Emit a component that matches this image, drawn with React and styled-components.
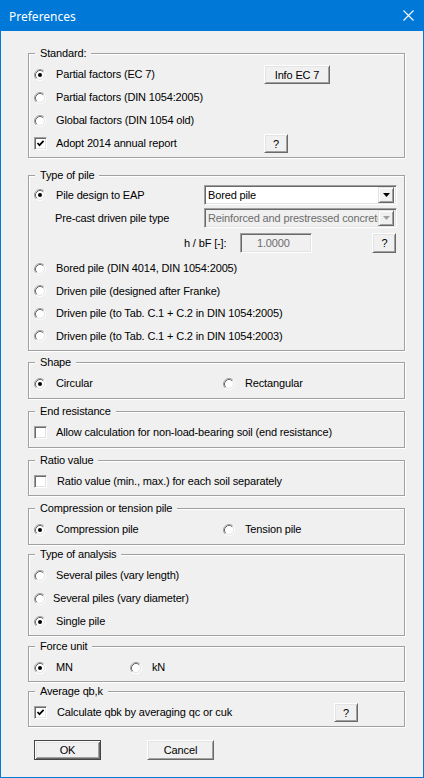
import React from "react";
import styled, { createGlobalStyle } from "styled-components";

const GlobalStyle = createGlobalStyle`
  html, body { margin: 0; padding: 0; background: #f0f0f0; }
  * { box-sizing: border-box; }
`;

const FONT = `"Liberation Sans", Arial, sans-serif`;
const LS = "-0.15px";

const Window = styled.div`
  width: 424px;
  height: 778px;
  display: flex;
  flex-direction: column;
  background: #f0f0f0;
  border-left: 1px solid #0078d7;
  border-right: 1px solid #0078d7;
  border-bottom: 1px solid #0078d7;
  font-family: ${FONT};
  font-size: 11px;
  letter-spacing: ${LS};
  color: #000;
`;

const TitleBar = styled.div`
  height: 31px;
  margin: 0 -1px;
  background: #0078d7;
  display: flex;
  align-items: center;
  justify-content: space-between;
  padding: 0 10px 0 9px;
  flex: none;
`;

const Title = styled.span`
  font-family: "Noto Sans", "Open Sans", sans-serif;
  font-size: 12px;
  letter-spacing: 0;
  color: #fff;
  margin-top: 1px;
`;

const Body = styled.div`
  display: flex;
  flex-direction: column;
  padding: 0 18px 0 27px;
`;

const Group = styled.div`
  margin-top: ${(p) => p.$mt}px;
  height: ${(p) => p.$h}px;
  border: 1px solid #a0a0a0;
  box-shadow: inset 1px 1px 0 #fff, 1px 1px 0 #fff;
  display: flex;
  flex-direction: column;
  flex: none;
`;

const Legend = styled.span`
  align-self: flex-start;
  margin: -7px 0 0 6px;
  padding: 0 5px 0 5px;
  height: 13px;
  line-height: 13px;
  background: #f0f0f0;
  white-space: nowrap;
`;

const Rows = styled.div`
  display: flex;
  flex-direction: column;
  margin-top: 3px;
`;

const Row = styled.div`
  display: flex;
  align-items: center;
  height: ${(p) => p.$h || 23}px;
  margin-top: ${(p) => p.$mt || 0}px;
  padding-left: ${(p) => (p.$pl == null ? 5 : p.$pl)}px;
  flex: none;
`;

const Item = styled.label`
  display: flex;
  align-items: center;
  width: ${(p) => (p.$w ? `${p.$w}px` : "auto")};
  flex: none;
  white-space: nowrap;
`;

const ItemText = styled.span`
  margin-left: ${(p) => (p.$gap == null ? 10 : p.$gap)}px;
  line-height: 13px;
`;

const PlainText = styled.span`
  line-height: 13px;
  white-space: nowrap;
  margin-left: ${(p) => p.$ml || 0}px;
`;

const RadioSvg = styled.svg`
  width: 12px;
  height: 12px;
  flex: none;
  display: block;
`;

const Radio = ({ checked }) => (
  <RadioSvg viewBox="0 0 12 12">
    <circle cx="6" cy="6" r="4.6" fill="#fff" />
    <path d="M2.11 9.89 A5.5 5.5 0 0 1 9.89 2.11" fill="none" stroke="#a0a0a0" strokeWidth="1" />
    <path d="M9.89 2.11 A5.5 5.5 0 0 1 2.11 9.89" fill="none" stroke="#ffffff" strokeWidth="1" />
    <path d="M2.82 9.18 A4.5 4.5 0 0 1 9.18 2.82" fill="none" stroke="#696969" strokeWidth="1" />
    <path d="M9.18 2.82 A4.5 4.5 0 0 1 2.82 9.18" fill="none" stroke="#e3e3e3" strokeWidth="1" />
    {checked && <circle cx="6" cy="6" r="2" fill="#000" />}
  </RadioSvg>
);

const CheckBox = styled.span`
  width: 13px;
  height: 13px;
  flex: none;
  background: #fff;
  border-style: solid;
  border-width: 1px;
  border-color: #a0a0a0 #fff #fff #a0a0a0;
  box-shadow: inset 1px 1px 0 #696969, inset -1px -1px 0 #e3e3e3;
  display: flex;
  align-items: center;
  justify-content: center;
`;

const Check = ({ checked }) => (
  <CheckBox>
    {checked && (
      <svg width="9" height="9" viewBox="0 0 9 9">
        <path d="M1.5 4 L3.5 6.2 L7.6 1.8" fill="none" stroke="#000" strokeWidth="1.7" />
      </svg>
    )}
  </CheckBox>
);

const Button = styled.button`
  width: ${(p) => p.$w}px;
  height: ${(p) => p.$h || 19}px;
  margin-left: ${(p) => p.$ml || 0}px;
  padding: 0;
  flex: none;
  background: #f0f0f0;
  font-family: ${FONT};
  font-size: 11px;
  letter-spacing: ${LS};
  color: #000;
  border-style: solid;
  border-width: 1px;
  border-color: ${(p) => (p.$default ? "#444" : "#fff #696969 #696969 #fff")};
  box-shadow: ${(p) =>
    p.$default
      ? "inset 1px 1px 0 #fff, inset -1px -1px 0 #696969, inset 2px 2px 0 #e3e3e3, inset -2px -2px 0 #a0a0a0"
      : "inset 1px 1px 0 #e3e3e3, inset -1px -1px 0 #a0a0a0"};
  display: flex;
  align-items: center;
  justify-content: center;
`;

const Sunken = styled.div`
  width: ${(p) => p.$w}px;
  height: ${(p) => p.$h}px;
  margin-left: ${(p) => p.$ml || 0}px;
  flex: none;
  background: ${(p) => (p.$disabled ? "#f0f0f0" : "#fff")};
  color: ${(p) => (p.$disabled ? "#6d6d6d" : "#000")};
  border-style: solid;
  border-width: 1px;
  border-color: #a0a0a0 #fff #fff #a0a0a0;
  box-shadow: inset 1px 1px 0 #696969, inset -1px -1px 0 #e3e3e3;
  display: flex;
  align-items: center;
  overflow: hidden;
  white-space: nowrap;
`;

const ComboText = styled.span`
  flex: 1;
  overflow: hidden;
  padding-left: 3px;
  line-height: 13px;
`;

const FieldText = styled.span`
  flex: 1;
  text-align: center;
  line-height: 13px;
  padding-right: 6px;
`;

const ArrowBtn = styled.span`
  width: 16px;
  height: 16px;
  margin-right: 2px;
  flex: none;
  background: #f0f0f0;
  border-style: solid;
  border-width: 1px;
  border-color: #e3e3e3 #696969 #696969 #e3e3e3;
  box-shadow: inset 1px 1px 0 #fff, inset -1px -1px 0 #a0a0a0;
  display: flex;
  align-items: center;
  justify-content: center;
`;

const Combo = ({ text, disabled }) => (
  <Sunken $w={193} $h={20} $disabled={disabled}>
    <ComboText>{text}</ComboText>
    <ArrowBtn>
      <svg width="7" height="4" viewBox="0 0 7 4">
        <path d="M0 0 H7 L3.5 4 Z" fill={disabled ? "#a0a0a0" : "#000"} />
      </svg>
    </ArrowBtn>
  </Sunken>
);

const CloseIcon = () => (
  <svg width="11" height="11" viewBox="0 0 11 11">
    <path d="M0.5 0.5 L10.5 10.5 M10.5 0.5 L0.5 10.5" stroke="#fff" strokeWidth="1.1" />
  </svg>
);

const Footer = styled.div`
  display: flex;
  margin-top: 13px;
  padding-left: 6px;
`;

export default function App() {
  return (
    <>
      <GlobalStyle />
      <Window>
        <TitleBar>
          <Title>Preferences</Title>
          <CloseIcon />
        </TitleBar>
        <Body>
          <Group $mt={22} $h={105}>
            <Legend>Standard:</Legend>
            <Rows>
              <Row>
                <Item $w={230}>
                  <Radio checked />
                  <ItemText>Partial factors (EC 7)</ItemText>
                </Item>
                <Button $w={66}>Info EC 7</Button>
              </Row>
              <Row>
                <Item>
                  <Radio />
                  <ItemText>Partial factors (DIN 1054:2005)</ItemText>
                </Item>
              </Row>
              <Row>
                <Item>
                  <Radio />
                  <ItemText>Global factors (DIN 1054 old)</ItemText>
                </Item>
              </Row>
              <Row>
                <Item $w={230}>
                  <Check checked />
                  <ItemText $gap={9}>Adopt 2014 annual report</ItemText>
                </Item>
                <Button $w={24}>?</Button>
              </Row>
            </Rows>
          </Group>

          <Group $mt={17} $h={176}>
            <Legend>Type of pile</Legend>
            <Rows>
              <Row $h={20}>
                <Item $w={170}>
                  <Radio checked />
                  <ItemText>Pile design to EAP</ItemText>
                </Item>
                <Combo text="Bored pile" />
              </Row>
              <Row $h={20} $mt={3} $pl={26}>
                <Item $w={149}>
                  <PlainText>Pre-cast driven pile type</PlainText>
                </Item>
                <Combo text="Reinforced and prestressed concrete" disabled />
              </Row>
              <Row $h={20} $mt={5} $pl={155}>
                <PlainText>h / bF [-]:</PlainText>
                <Sunken $w={72} $h={20} $ml={14} $disabled>
                  <FieldText>1.0000</FieldText>
                </Sunken>
                <Button $w={24} $h={20} $ml={60}>?</Button>
              </Row>
              <Row $mt={4}>
                <Item>
                  <Radio />
                  <ItemText>Bored pile (DIN 4014, DIN 1054:2005)</ItemText>
                </Item>
              </Row>
              <Row $h={22.5}>
                <Item>
                  <Radio />
                  <ItemText>Driven pile (designed after Franke)</ItemText>
                </Item>
              </Row>
              <Row $h={22.5}>
                <Item>
                  <Radio />
                  <ItemText>Driven pile (to Tab. C.1 + C.2 in DIN 1054:2005)</ItemText>
                </Item>
              </Row>
              <Row $h={22.5}>
                <Item>
                  <Radio />
                  <ItemText>Driven pile (to Tab. C.1 + C.2 in DIN 1054:2003)</ItemText>
                </Item>
              </Row>
            </Rows>
          </Group>

          <Group $mt={11} $h={37}>
            <Legend>Shape</Legend>
            <Rows>
              <Row>
                <Item $w={189}>
                  <Radio checked />
                  <ItemText>Circular</ItemText>
                </Item>
                <Item>
                  <Radio />
                  <ItemText>Rectangular</ItemText>
                </Item>
              </Row>
            </Rows>
          </Group>

          <Group $mt={12} $h={37}>
            <Legend>End resistance</Legend>
            <Rows>
              <Row>
                <Item>
                  <Check />
                  <ItemText $gap={9}>Allow calculation for non-load-bearing soil (end resistance)</ItemText>
                </Item>
              </Row>
            </Rows>
          </Group>

          <Group $mt={12} $h={36}>
            <Legend>Ratio value</Legend>
            <Rows>
              <Row>
                <Item>
                  <Check />
                  <ItemText>Ratio value (min., max.) for each soil separately</ItemText>
                </Item>
              </Row>
            </Rows>
          </Group>

          <Group $mt={12} $h={37}>
            <Legend>Compression or tension pile</Legend>
            <Rows>
              <Row>
                <Item $w={189}>
                  <Radio checked />
                  <ItemText>Compression pile</ItemText>
                </Item>
                <Item>
                  <Radio />
                  <ItemText>Tension pile</ItemText>
                </Item>
              </Row>
            </Rows>
          </Group>

          <Group $mt={9} $h={82}>
            <Legend>Type of analysis</Legend>
            <Rows>
              <Row>
                <Item>
                  <Radio />
                  <ItemText>Several piles (vary length)</ItemText>
                </Item>
              </Row>
              <Row>
                <Item>
                  <Radio />
                  <ItemText $gap={7}>Several piles (vary diameter)</ItemText>
                </Item>
              </Row>
              <Row>
                <Item>
                  <Radio checked />
                  <ItemText>Single pile</ItemText>
                </Item>
              </Row>
            </Rows>
          </Group>

          <Group $mt={10} $h={36}>
            <Legend>Force unit</Legend>
            <Rows>
              <Row>
                <Item $w={96}>
                  <Radio checked />
                  <ItemText>MN</ItemText>
                </Item>
                <Item>
                  <Radio />
                  <ItemText>kN</ItemText>
                </Item>
              </Row>
            </Rows>
          </Group>

          <Group $mt={9} $h={36}>
            <Legend>Average qb,k</Legend>
            <Rows>
              <Row>
                <Item $w={300}>
                  <Check checked />
                  <ItemText>Calculate qbk by averaging qc or cuk</ItemText>
                </Item>
                <Button $w={24}>?</Button>
              </Row>
            </Rows>
          </Group>

          <Footer>
            <Button $w={67} $h={20} $default>OK</Button>
            <Button $w={67} $h={20} $ml={46}>Cancel</Button>
          </Footer>
        </Body>
      </Window>
    </>
  );
}
